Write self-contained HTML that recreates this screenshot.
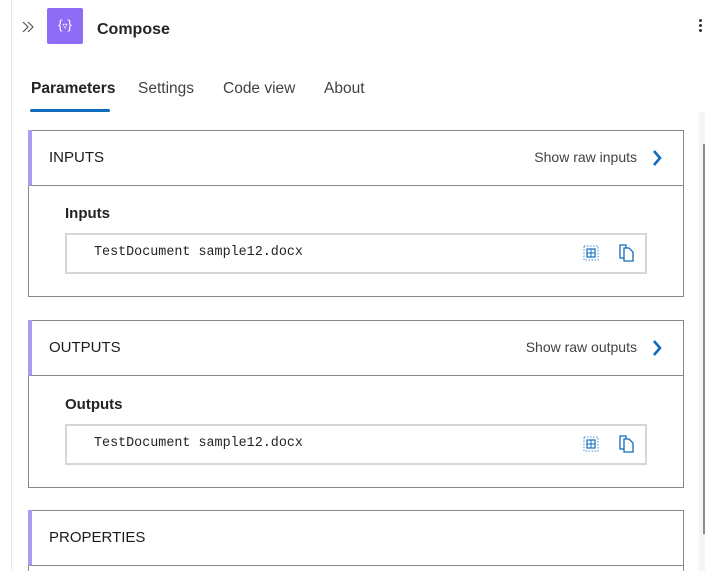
<!DOCTYPE html>
<html><head><style>
*{margin:0;padding:0;box-sizing:border-box}
html,body{width:705px;height:571px;overflow:hidden}
body{background:#fff;font-family:"Liberation Sans",sans-serif;color:#242424;position:relative}
.abs{position:absolute}
.box{position:absolute;left:28px;width:656px;border:1px solid #8a8886;background:#fff}
.hdr{border-bottom:1px solid #8a8886;position:relative;border-left:4px solid #a99cf0;margin-left:-1px;margin-top:-1px;height:56px}
.hdr .t{position:absolute;left:17px;top:19px;font-size:15px;color:#1b1b1b}
.hdr .r{position:absolute;right:46px;top:19px;font-size:14px;color:#424242}
.hdr svg{position:absolute;right:20px;top:19px}
.lbl{position:absolute;left:36px;top:18px;font-size:15px;font-weight:bold;color:#242424}
.fld{position:absolute;left:36px;top:46px;width:582px;height:41px;border:2px solid #d6d6d6}
.fld span{position:absolute;left:27px;top:10px;font-family:"Liberation Mono",monospace;font-size:13.4px}
</style></head><body>
<div class="abs" style="left:11px;top:0;width:1px;height:571px;background:#e6e6e6"></div>
<svg class="abs" style="left:21px;top:20px" width="14" height="14" viewBox="0 0 14 14" fill="none" stroke="#555" stroke-width="1.2"><path d="M2 2l5 5-5 5M7 2l5 5-5 5"/></svg>
<div class="abs" style="left:47px;top:8px;width:36px;height:36px;background:#8f6cf5;border-radius:2px;color:#fff;font-size:13px;text-align:center;line-height:34px">{<span style="font-size:10px">▿</span>}</div>
<div class="abs" style="left:97px;top:21px;font-size:16px;font-weight:bold;color:#242424">Compose</div>
<div class="abs" style="left:699px;top:19px;width:3px;height:3px;border-radius:2px;background:#333;box-shadow:0 5px 0 #333,0 10px 0 #333"></div>
<div class="abs" style="left:31px;top:80px;font-size:15.5px;font-weight:bold">Parameters</div>
<div class="abs" style="left:30px;top:109px;width:80px;height:3px;border-radius:2px;background:#0f6cbd"></div>
<div class="abs" style="left:138px;top:80px;font-size:15.5px;color:#424242">Settings</div>
<div class="abs" style="left:223px;top:80px;font-size:15.5px;color:#424242">Code view</div>
<div class="abs" style="left:324px;top:80px;font-size:15.5px;color:#424242">About</div>
<div class="abs" style="left:699px;top:112px;width:6px;height:459px;background:#f5f5f5"></div>
<div class="abs" style="left:703px;top:144px;width:2px;height:390px;background:#8a8a8a"></div>

<div class="box" style="top:130px;height:167px">
<div class="hdr"><span class="t">INPUTS</span><span class="r">Show raw inputs</span><svg width="12" height="18" viewBox="0 0 12 18" fill="none" stroke="#0f6cbd" stroke-width="2.6"><path d="M3 2l6 7-6 7"/></svg></div>
<div class="lbl" style="top:74px">Inputs</div>
<div class="fld" style="top:102px"><span>TestDocument sample12.docx</span>
<svg class="abs" style="left:516px;top:10px" width="16" height="16" viewBox="0 0 16 16" fill="none" stroke="#0f6cbd"><rect x="1" y="1" width="14" height="14" stroke-dasharray="1.5 1.5" stroke="#4a90e2"/><rect x="4" y="4" width="8" height="8" stroke-width="1.2"/><path d="M8 4v8M4 8h8"/></svg>
<svg class="abs" style="left:551px;top:8px" width="18" height="20" viewBox="0 0 18 20" fill="none" stroke="#0f6cbd" stroke-width="1.3"><path d="M2 2h6v13H2z"/><path d="M6 5h5l4 4v9H6z" fill="#fff"/></svg></div>
</div>

<div class="box" style="top:320px;height:168px">
<div class="hdr"><span class="t">OUTPUTS</span><span class="r">Show raw outputs</span><svg width="12" height="18" viewBox="0 0 12 18" fill="none" stroke="#0f6cbd" stroke-width="2.6"><path d="M3 2l6 7-6 7"/></svg></div>
<div class="lbl" style="top:75px">Outputs</div>
<div class="fld" style="top:103px"><span>TestDocument sample12.docx</span>
<svg class="abs" style="left:516px;top:10px" width="16" height="16" viewBox="0 0 16 16" fill="none" stroke="#0f6cbd"><rect x="1" y="1" width="14" height="14" stroke-dasharray="1.5 1.5" stroke="#4a90e2"/><rect x="4" y="4" width="8" height="8" stroke-width="1.2"/><path d="M8 4v8M4 8h8"/></svg>
<svg class="abs" style="left:551px;top:8px" width="18" height="20" viewBox="0 0 18 20" fill="none" stroke="#0f6cbd" stroke-width="1.3"><path d="M2 2h6v13H2z"/><path d="M6 5h5l4 4v9H6z" fill="#fff"/></svg></div>
</div>

<div class="box" style="top:510px;height:80px">
<div class="hdr"><span class="t">PROPERTIES</span></div>
</div>
</body></html>
